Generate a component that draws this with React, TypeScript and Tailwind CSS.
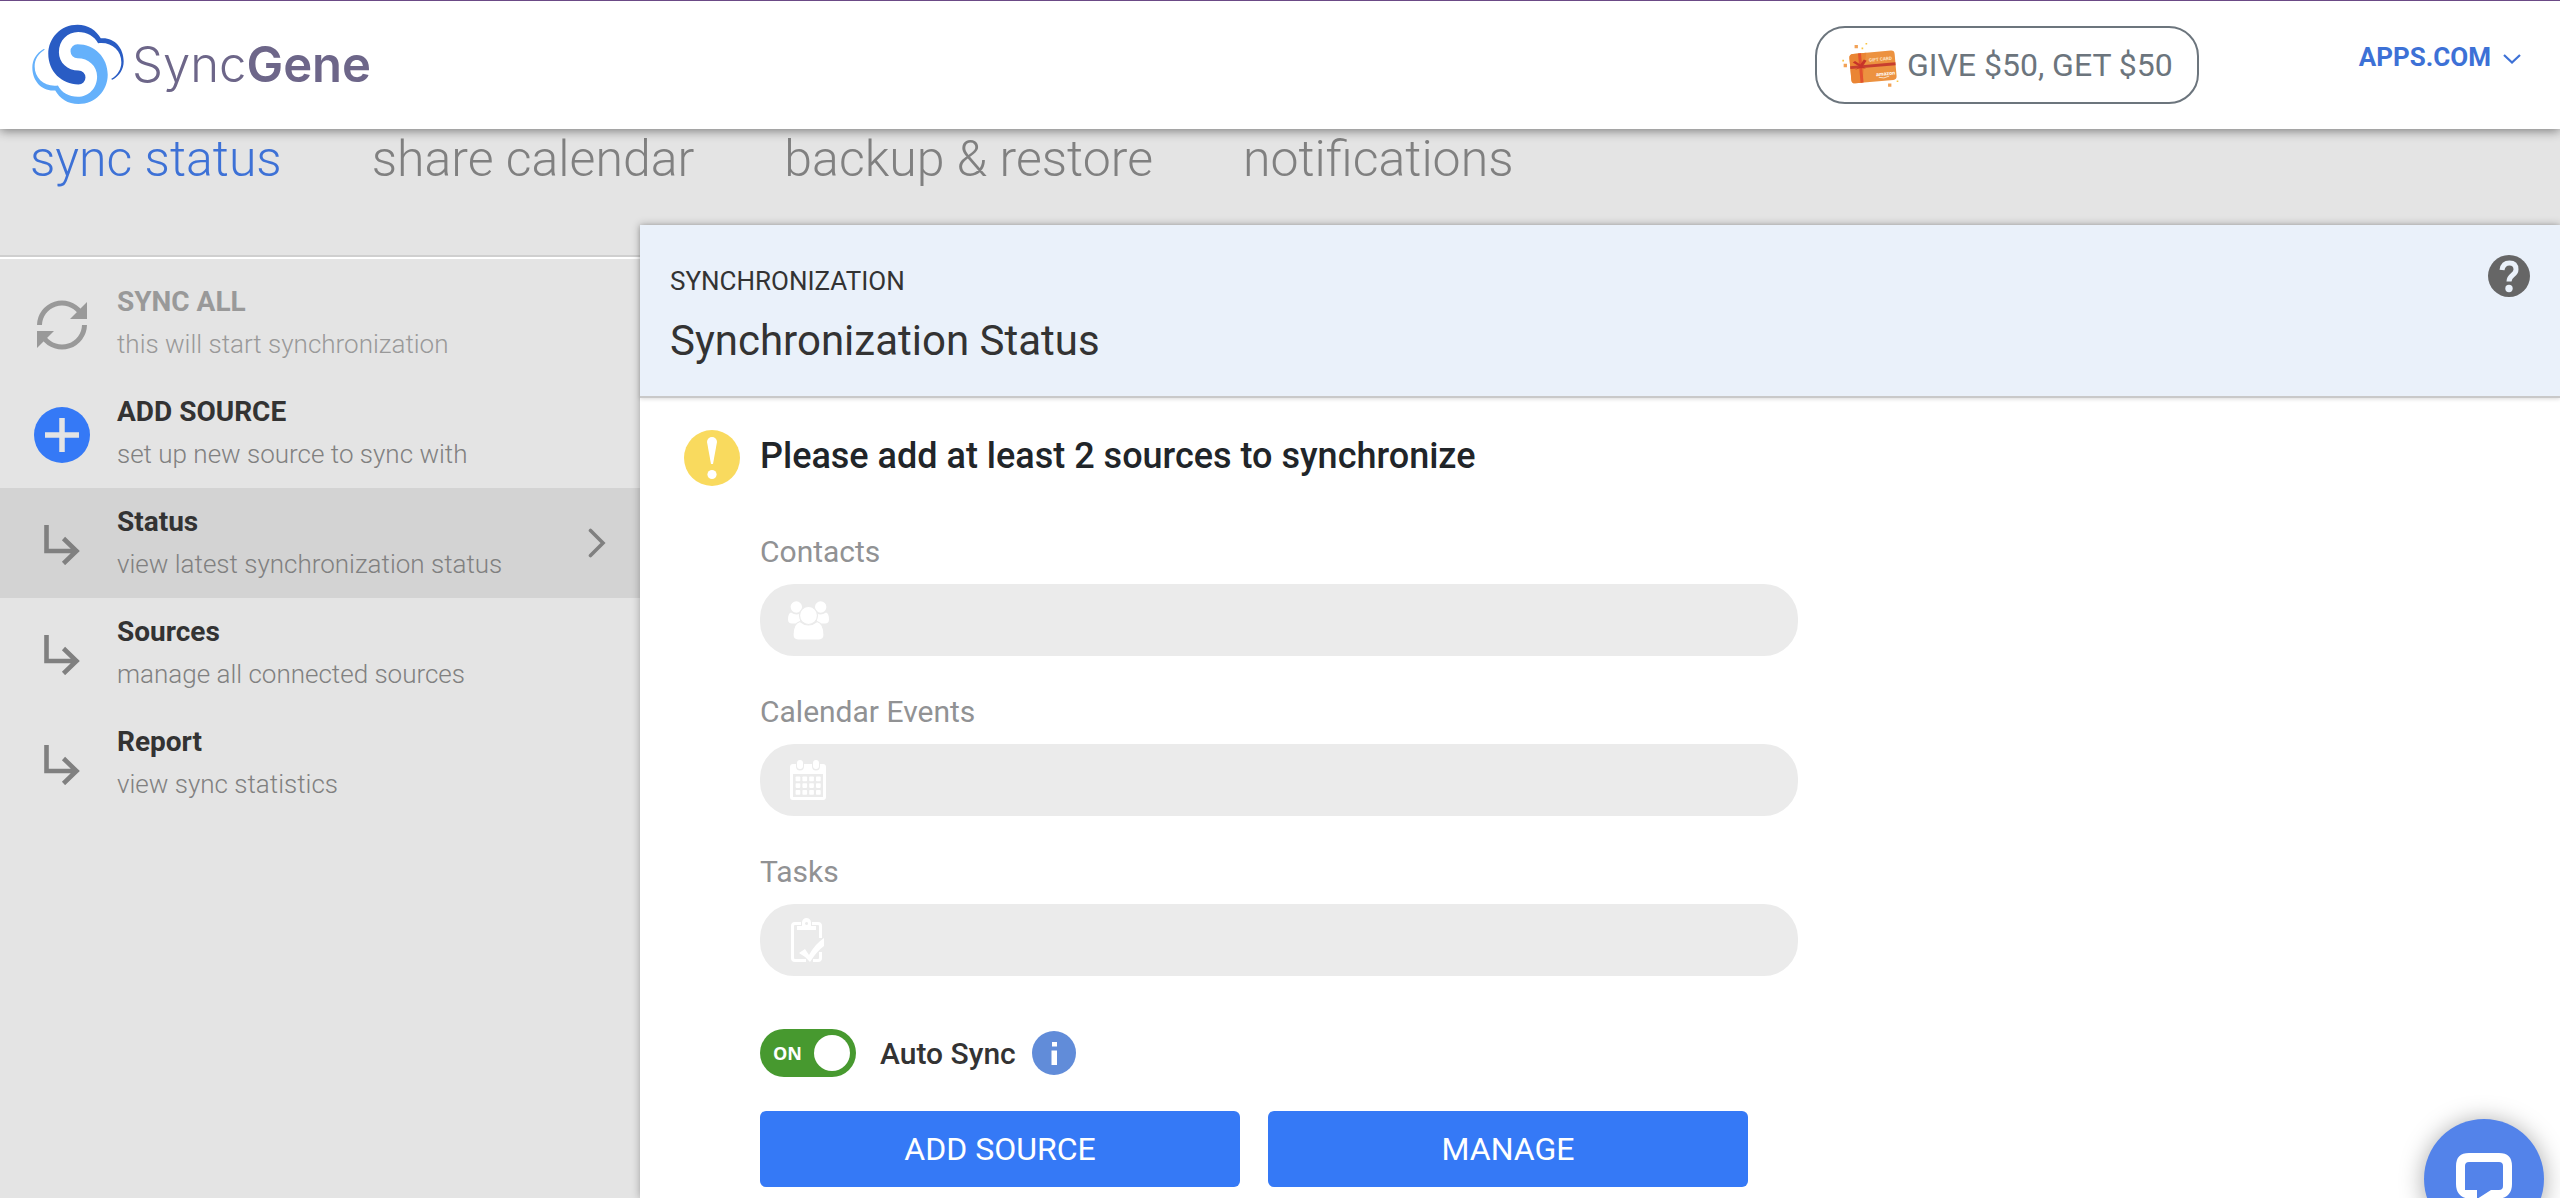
import React, { useState } from 'react';

const tabs = ['sync status', 'share calendar', 'backup & restore', 'notifications'];

const Logo: React.FC = () => {
  const swirl =
    'M303 116 C290 92 265 75 233 75 C182 75 145 115 145 163 C145 216 185 255 236 255 A21 21 0 0 0 236 213 C203 213 177 190 177 158 C177 122 203 97 235 97 C262 97 284 110 295 131 C335 126 365 152 365 188 C365 208 355 226 334 239 L338 241 C360 228 372 209 372 185 C372 143 342 112 303 116Z';
  return (
    <svg viewBox="96 74 277 242" className="h-[81px] w-[92px] shrink-0" aria-hidden="true">
      <path d={swirl} fill="#65b1fb" transform="rotate(180 234.5 194.5)" />
      <path d={swirl} fill="#295cc4" />
    </svg>
  );
};

const GiftCard: React.FC = () => (
  <svg viewBox="35 30 175 140" className="h-[47px] w-[58px] shrink-0" aria-hidden="true">
    <g transform="rotate(-5 131 104)">
      <rect x="63" y="60" width="137" height="89" rx="11" fill="#ec9240" />
      <path d="M63 72a12 12 0 0 1 12-12h40l-20 89H74a11 11 0 0 1-11-11z" fill="#ea8534" />
      <rect x="90" y="60" width="9" height="89" fill="#e2512f" />
      <rect x="63" y="96" width="137" height="9" fill="#c73e2f" />
      <path d="M92 100 L72 86 L79 82 L94 94 L106 80 L114 84 L100 100 L110 107 L92 104 L76 109Z" fill="#c73429" />
      <text x="121" y="88" fontSize="14" fontWeight="700" fill="#fde3c4" fontFamily="Roboto, sans-serif">GIFT CARD</text>
      <text x="139" y="133" fontSize="16" fontWeight="700" fill="#fff" fontFamily="Roboto, sans-serif">amazon</text>
      <path d="M146 137 Q161 144 178 136" fill="none" stroke="#fff" strokeWidth="2" />
    </g>
    <path d="M76 38h10v10H76zM43 95h10v10H43zM177 154h10v10h-10z" fill="#f2a257" />
    <path d="M109 32h5v5h-5zM97 46h5v5h-5zM39 83h5v5h-5zM203 145h5v5h-5z" fill="#f8c440" />
  </svg>
);

const SyncIcon: React.FC = () => (
  <svg viewBox="0 0 50 50" className="h-[50px] w-[50px]" aria-hidden="true">
    <g fill="none" stroke="#999" strokeWidth="5">
      <path d="M2.500 25 A22.500 22.500 0 0 1 43 12" />
      <path d="M47.500 25 A22.500 22.500 0 0 1 7 38" />
    </g>
    <path d="M50 2v17H33zM0 48V31h17z" fill="#999" />
  </svg>
);

const PlusIcon: React.FC = () => (
  <svg viewBox="0 0 56 56" className="h-14 w-14" aria-hidden="true">
    <circle cx="28" cy="28" r="28" fill="#3579f6" />
    <path d="M28 11v34M11 28h34" stroke="#e4e4e4" strokeWidth="5.500" />
  </svg>
);

const CornerArrow: React.FC = () => (
  <svg viewBox="0 0 36 40" className="h-10 w-9" aria-hidden="true">
    <path d="M2.500 0v26h31M19.500 13.500l13 12.500-13 12.500" fill="none" stroke="#808080" strokeWidth="4.600" />
  </svg>
);

interface MenuItem {
  title: string;
  text: string;
  icon: React.ReactNode;
  active?: boolean;
  disabled?: boolean;
}

const menu: MenuItem[] = [
  { title: 'SYNC ALL', text: 'this will start synchronization', icon: <SyncIcon />, disabled: true },
  { title: 'ADD SOURCE', text: 'set up new source to sync with', icon: <PlusIcon /> },
  { title: 'Status', text: 'view latest synchronization status', icon: <CornerArrow />, active: true },
  { title: 'Sources', text: 'manage all connected sources', icon: <CornerArrow /> },
  { title: 'Report', text: 'view sync statistics', icon: <CornerArrow /> },
];

const ContactsIcon: React.FC = () => (
  <svg viewBox="0 0 41 39" className="h-[39px] w-[41px]" aria-hidden="true">
    <g fill="#fff">
      <circle cx="8.300" cy="6" r="5.700" />
      <circle cx="32.700" cy="6" r="5.700" />
      <path d="M3 11.500q5 3.500 9 1v10H4q-4 0-4-4 0-6 3-7zM38 11.500q-5 3.500-9 1v10h8q4 0 4-4 0-6-3-7z" />
    </g>
    <g fill="#fff" stroke="#ebebeb" strokeWidth="1.200">
      <path d="M12 20.500q8.500 7 17 0 7 2 7 13.500 0 5-5 5H10q-5 0-5-5 0-11.500 7-13.500z" />
      <circle cx="20.500" cy="14.500" r="9" />
    </g>
  </svg>
);

const CalendarIcon: React.FC = () => (
  <svg viewBox="0 0 36 40" className="h-10 w-9" aria-hidden="true">
    <path
      d="M3 4h3v2q0 4.500 4 4.500T14 6V4h8v2q0 4.500 4 4.500T30 6V4h3q3 0 3 3v30q0 3-3 3H3q-3 0-3-3V7q0-3 3-3zm0 10v23h30V14z"
      fill="#fff"
      fillRule="evenodd"
    />
    <rect x="7" y="0" width="6" height="9" rx="3" fill="#fff" />
    <rect x="23" y="0" width="6" height="9" rx="3" fill="#fff" />
    {[16.5, 23.2, 30].map((y) =>
      [5.6, 12.4, 19.2, 26].map((x) => <rect key={`${x}-${y}`} x={x} y={y} width="4.700" height="4.700" rx="0.800" fill="#fff" />)
    )}
  </svg>
);

const TasksIcon: React.FC = () => (
  <svg viewBox="0 0 34 44" className="h-11 w-[34px]" aria-hidden="true">
    <path d="M10 5.500H4Q1.500 5.500 1.500 8v32q0 2.500 2.500 2.500h11M21 5.500h6q2.500 0 2.500 2.500v12M29.500 34v6q0 2.500-2.500 2.500h-5" fill="none" stroke="#fff" strokeWidth="3" />
    <path d="M6 8h5V4.500a4.500 4.500 0 0 1 9 0V8h5v4H6zM15.500 4a1.500 1.500 0 1 0 .01 3 1.500 1.500 0 0 0-.01-3z" fill="#fff" fillRule="evenodd" />
    <path d="M8 35l6-4 4 6q6-11 15-17v8q-7 5-14 16-5-6-11-9z" fill="#fff" />
  </svg>
);

const progress = [
  { label: 'Contacts', icon: <ContactsIcon /> },
  { label: 'Calendar Events', icon: <CalendarIcon /> },
  { label: 'Tasks', icon: <TasksIcon /> },
];

const Header: React.FC = () => (
  <header className="relative z-10 flex h-[129px] shrink-0 items-start justify-between border-t border-[#6b4a86] bg-white pr-[39px] pl-8 shadow-[0_2px_10px_rgba(0,0,0,0.45)]">
    <a href="#home" className="flex items-center gap-2 pt-[23px]">
      <Logo />
      <span className="font-[Inter,sans-serif] text-[49px] leading-[76px] font-light text-[#6d6689]">
        Sync<span className="font-semibold">Gene</span>
      </span>
    </a>
    <div className="flex items-start">
      <button type="button" className="mt-[25px] mr-[160px] flex h-[78px] items-center gap-2 rounded-[30px] border-2 border-[#6c757d] px-6 text-[32px] text-[#6c757d]">
        <GiftCard />
        GIVE $50, GET $50
      </button>
      <button type="button" className="mt-[38px] flex items-center gap-3 text-[26px] leading-9 font-bold text-[#3d71d6]">
        APPS.COM
        <svg viewBox="0 0 18 10" className="mt-1 h-[10px] w-[18px]" aria-hidden="true">
          <path d="M1 1l8 7.500L17 1" fill="none" stroke="#3d71d6" strokeWidth="2.200" />
        </svg>
      </button>
    </div>
  </header>
);

const Sidebar: React.FC = () => (
  <aside className="mt-[30px] w-[640px] shrink-0 border-t-2 border-[#cfcfcf]">
    <ul className="border-t-2 border-white pt-[9px]">
      {menu.map((item) => (
        <li key={item.title}>
          <button
            type="button"
            disabled={item.disabled}
            className={`flex h-[110px] w-full items-center pr-[34px] text-left ${item.active ? 'bg-[#d3d3d3]' : ''}`}
          >
            <span className="flex w-[117px] shrink-0 justify-center pt-[3px] pl-[6px]">{item.icon}</span>
            <span className="min-w-0 grow">
              <span className={`block text-[28px] leading-[42px] font-bold ${item.disabled ? 'text-[#999]' : 'text-[#333]'}`}>{item.title}</span>
              <span className={`block text-[26px] leading-[42px] font-light ${item.disabled ? 'text-[#999]' : 'text-[#808080]'}`}>{item.text}</span>
            </span>
            {item.active && (
              <svg viewBox="0 0 18 30" className="h-[30px] w-[18px]" aria-hidden="true">
                <path d="M2.500 2.500L15 15 2.500 27.500" fill="none" stroke="#808080" strokeWidth="3.600" strokeLinecap="round" />
              </svg>
            )}
          </button>
        </li>
      ))}
    </ul>
  </aside>
);

const StatusPanel: React.FC = () => {
  const [autoSync, setAutoSync] = useState(true);
  return (
    <main className="min-w-0 grow bg-white shadow-[0_0_8px_rgba(0,0,0,0.3)]">
      <div className="flex h-[173px] items-start justify-between border-b-2 border-[#c9c9c9] bg-[#eaf1fa] px-[30px] pt-[30px] text-[#333] shadow-[0_1px_4px_rgba(0,0,0,0.15)]">
        <div>
          <p className="text-[26px] leading-[52px]">SYNCHRONIZATION</p>
          <h1 className="text-[42px] leading-[68px]">Synchronization Status</h1>
        </div>
        <button type="button" aria-label="Help">
          <svg viewBox="0 0 42 42" className="h-[42px] w-[42px]" aria-hidden="true">
            <circle cx="21" cy="21" r="21" fill="#666" />
            <path d="M14 15q1-7 7.500-7t6.500 6.500c0 6-7 5-7 12" fill="none" stroke="#eaf1fa" strokeWidth="5" />
            <circle cx="21" cy="33.500" r="3.700" fill="#eaf1fa" />
          </svg>
        </button>
      </div>

      <div className="flex items-start gap-5 pt-8 pl-11">
        <svg viewBox="0 0 56 56" className="h-14 w-14 shrink-0" aria-hidden="true">
          <circle cx="28" cy="28" r="28" fill="#f9da5e" />
          <path d="M23 12a5 5 0 0 1 10 0L29 34h-2z" fill="#fff" />
          <circle cx="28" cy="44.500" r="4.600" fill="#fff" />
        </svg>
        <div className="min-w-0 grow">
          <h2 className="text-[36px] leading-[52px] font-medium text-[#212529]">Please add at least 2 sources to synchronize</h2>

          <div className="mt-[46px] flex max-w-[1038px] flex-col gap-8">
            {progress.map((row) => (
              <div key={row.label}>
                <p className="mb-2 text-[30px] leading-[48px] text-[#919294]">{row.label}</p>
                <div className="flex h-[72px] items-center rounded-[34px] bg-[#ebebeb] pl-[18px]">
                  <span className="flex w-[60px] justify-center">{row.icon}</span>
                </div>
              </div>
            ))}
          </div>

          <div className="mt-[53px] flex items-center">
            <label className="relative flex cursor-pointer items-center text-[30px] font-medium text-[#333]">
              <input
                type="checkbox"
                checked={autoSync}
                onChange={(e) => setAutoSync(e.target.checked)}
                className="peer h-12 w-24 appearance-none rounded-full bg-gray-400 checked:bg-[#47992f]"
              />
              <span className="pointer-events-none absolute left-[13px] font-['Open_Sans',sans-serif] text-[18px] font-bold text-white">ON</span>
              <span className="pointer-events-none absolute left-[54px] h-9 w-9 rounded-full bg-white" />
              <span className="pl-6">Auto Sync</span>
            </label>
            <button type="button" aria-label="About Auto Sync" className="ml-4">
              <svg viewBox="0 0 44 44" className="h-11 w-11" aria-hidden="true">
                <circle cx="22" cy="22" r="22" fill="#618cd9" />
                <path d="M20 11h5v4.500h-5zM19.500 19.500h5.500V34h-5.500z" fill="#fff" />
              </svg>
            </button>
          </div>

          <div className="mt-[34px] flex gap-7 text-[32px] text-white">
            <button type="button" className="h-[76px] w-[480px] rounded-md bg-[#3579f6]">ADD SOURCE</button>
            <button type="button" className="h-[76px] w-[480px] rounded-md bg-[#3579f6]">MANAGE</button>
          </div>
        </div>
      </div>
    </main>
  );
};

export default function App() {
  return (
    <div className="flex h-screen flex-col overflow-hidden bg-[#e4e4e4] font-[Roboto,sans-serif]">
      <Header />

      <nav className="flex h-24 shrink-0 gap-[90px] pl-[30px] text-[50px] leading-[60px] font-light">
        {tabs.map((tab, i) => (
          <a key={tab} href={`#${tab}`} className={i === 0 ? 'text-[#3d71d6]' : 'text-[#808080]'}>
            {tab}
          </a>
        ))}
      </nav>

      <div className="flex grow">
        <Sidebar />
        <StatusPanel />
      </div>

      {/* live chat launcher */}
      <button
        type="button"
        aria-label="Open chat"
        className="fixed right-4 -bottom-[41px] flex h-[120px] w-[120px] justify-center rounded-full bg-[#5383ea] pt-[34px] shadow-[0_2px_24px_rgba(0,0,0,0.35)]"
      >
        <svg viewBox="0 0 56 60" className="h-[60px] w-14" aria-hidden="true">
          <path
            d="M13 0h30q13 0 13 13v18q0 13-13 15L21 58V37H9V13q0-4 4-4h30q4 0 4 4v20q0 4-4 4h-8L21 46h-8Q0 44 0 31V13Q0 0 13 0z"
            fill="#fff"
            fillRule="evenodd"
          />
        </svg>
      </button>
    </div>
  );
}
